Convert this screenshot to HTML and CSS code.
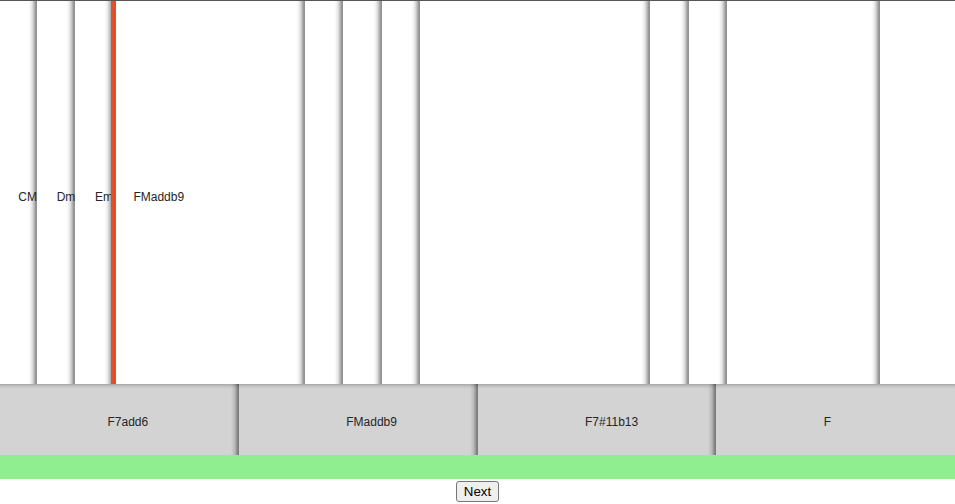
FILE: index.html
```html
<!DOCTYPE html>
<html lang="en">
<head>
<meta charset="utf-8">
<title>Chord timeline</title>
<link rel="stylesheet" href="styles.css">
</head>
<body>
<div class="app">
  <div class="timeline">
    <div class="track">
      <div class="col w1"><span class="label">CM</span></div>
      <div class="col w1"><span class="label">Dm</span></div>
      <div class="col w1"><span class="label">Em</span></div>
      <div class="col w5"><span class="label">FMaddb9</span></div>
      <div class="col w1"></div>
      <div class="col w1"></div>
      <div class="col w1"></div>
      <div class="col w6"></div>
      <div class="col w1"></div>
      <div class="col w1"></div>
      <div class="col w4"></div>
      <div class="col w4"></div>
    </div>
    <div class="playhead"></div>
  </div>
  <div class="queue">
    <div class="cell"><span class="label">F7add6</span></div>
    <div class="cell"><span class="label">FMaddb9</span></div>
    <div class="cell"><span class="label">F7#11b13</span></div>
    <div class="cell"><span class="label">F</span></div>
  </div>
  <div class="progress"></div>
  <div class="controls">
    <button class="next" type="button">Next</button>
  </div>
</div>
</body>
</html>
```

FILE: styles.css
```css
* {
  box-sizing: border-box;
}

html, body {
  margin: 0;
  padding: 0;
  background: #ffffff;
}

body {
  font-family: "Liberation Sans", Arial, sans-serif;
  font-size: 12px;
  color: #262626;
  width: 955px;
  overflow: hidden;
}

.app {
  display: flex;
  flex-direction: column;
  width: 955px;
}

.timeline {
  position: relative;
  height: 384px;
  border-top: 1px solid #555555;
  overflow: hidden;
}

.track {
  display: flex;
  height: 383px;
  margin-left: -1.65px;
}

.col {
  flex: none;
  height: 100%;
  display: flex;
  align-items: center;
  padding-top: 8px;
  padding-left: 20px;
  overflow: hidden;
  white-space: nowrap;
  background:
    linear-gradient(to left,
      rgba(0, 0, 0, 0.44) 0,
      rgba(0, 0, 0, 0.40) 1.5px,
      rgba(0, 0, 0, 0.26) 3px,
      rgba(0, 0, 0, 0.11) 5px,
      rgba(0, 0, 0, 0.03) 7px,
      rgba(0, 0, 0, 0) 9px),
    #ffffff;
}

.w1 { width: 38.345px; }
.w4 { width: 153.38px; }
.w5 { width: 191.725px; }
.w6 { width: 230.07px; }

.label {
  display: block;
  line-height: normal;
}

.playhead {
  position: absolute;
  top: 0;
  left: 111.2px;
  width: 4.8px;
  height: 383px;
  background: #e34f2b;
}

.queue {
  display: flex;
  height: 71px;
}

.cell {
  flex: none;
  width: 25%;
  display: flex;
  align-items: center;
  padding-top: 4px;
  padding-left: 107.5px;
  overflow: hidden;
  white-space: nowrap;
  background:
    linear-gradient(to bottom,
      rgba(0, 0, 0, 0.22) 0,
      rgba(0, 0, 0, 0.12) 1.5px,
      rgba(0, 0, 0, 0.05) 3px,
      rgba(0, 0, 0, 0) 5px),
    #d3d3d3;
}

.cell:not(:last-child) {
  background:
    linear-gradient(to left,
      rgba(0, 0, 0, 0.42) 0,
      rgba(0, 0, 0, 0.38) 1.5px,
      rgba(0, 0, 0, 0.22) 3px,
      rgba(0, 0, 0, 0.09) 5px,
      rgba(0, 0, 0, 0) 8px),
    linear-gradient(to bottom,
      rgba(0, 0, 0, 0.22) 0,
      rgba(0, 0, 0, 0.12) 1.5px,
      rgba(0, 0, 0, 0.05) 3px,
      rgba(0, 0, 0, 0) 5px),
    #d3d3d3;
}

.progress {
  height: 24px;
  background: #90ee90;
}

.controls {
  text-align: center;
  padding-top: 2px;
}

.next {
  font-family: "Liberation Sans", Arial, sans-serif;
  font-size: 13.333px;
  line-height: normal;
  color: #000000;
  background: #efefef;
  border: 1px solid #767676;
  border-radius: 3px;
  padding: 2px 7px;
  margin: 0;
  vertical-align: top;
}
```
